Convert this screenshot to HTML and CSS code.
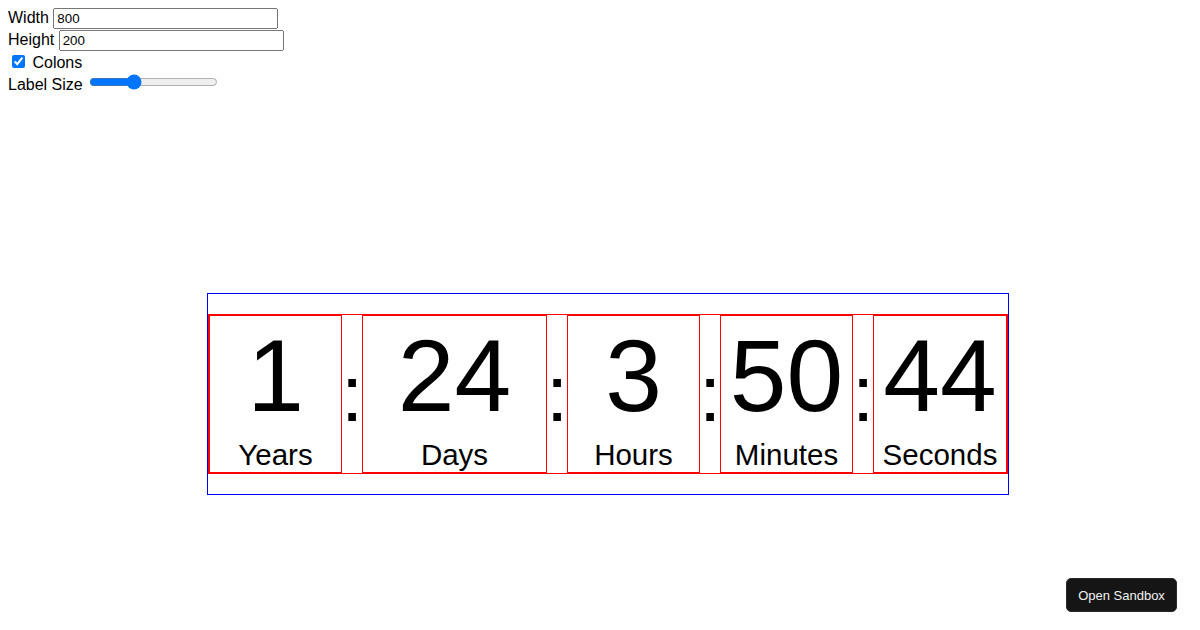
FILE: index.html
```html
<!DOCTYPE html>
<html>
<head>
<meta charset="utf-8">
<link rel="stylesheet" href="styles.css">
</head>
<body>
<div class="controls">
  <div class="row"><label>Width <input class="num" type="text" value="800"></label></div>
  <div class="row"><label>Height <input class="num" type="text" value="200"></label></div>
  <div class="row row-check"><label><input type="checkbox" checked> Colons</label></div>
  <div class="row row-range"><label>Label Size <input type="range" min="0" max="100" value="33"></label></div>
</div>
<div class="stage">
  <div class="frame">
    <div class="clock">
      <div class="unit u-years"><div class="value">1</div><div class="label">Years</div></div>
      <div class="colon">:</div>
      <div class="unit u-days"><div class="value">24</div><div class="label">Days</div></div>
      <div class="colon">:</div>
      <div class="unit u-hours"><div class="value">3</div><div class="label">Hours</div></div>
      <div class="colon">:</div>
      <div class="unit u-minutes"><div class="value">50</div><div class="label">Minutes</div></div>
      <div class="colon">:</div>
      <div class="unit u-seconds"><div class="value">44</div><div class="label">Seconds</div></div>
    </div>
  </div>
</div>
<button class="sandbox">Open Sandbox</button>
</body>
</html>
```
FILE: styles.css
```css
body {
  margin: 8px;
  font-family: "Liberation Sans", Arial, sans-serif;
  font-size: 16px;
  color: #000;
  background: #fff;
}
.controls .row {
  height: 22px;
  line-height: normal;
}
.controls .row-check {
  height: 20px;
}
.controls .row-range {
  height: 22px;
}
.num {
  box-sizing: border-box;
  width: 225px;
  font-family: "Liberation Sans", Arial, sans-serif;
  font-size: 13.33px;
  margin: 0;
}
.stage {
  width: 100vw;
  display: flex;
  justify-content: center;
  margin-top: 199px;
}
.frame {
  width: 800px;
  height: 200px;
  border: 1px solid blue;
  display: flex;
  align-items: center;
}
.clock {
  box-sizing: border-box;
  width: 800px;
  height: 160px;
  border: 1px solid red;
  display: grid;
  grid-template-columns: 133px 20px 185px 20px 133px 20px 133px 20px 1fr;
}
.unit {
  border: 1px solid red;
  display: flex;
  flex-direction: column;
  justify-content: flex-start;
  align-items: center;
  text-align: center;
  padding-top: 2px;
}
.value {
  font-size: 102px;
  line-height: normal;
}
.label {
  font-size: 29.5px;
  line-height: normal;
  margin-top: 3px;
}
.colon {
  font-size: 80px;
  line-height: normal;
  display: flex;
  align-items: center;
  justify-content: center;
  overflow: visible;
}
.sandbox {
  position: fixed;
  right: 23px;
  bottom: 18px;
  width: 111px;
  height: 34px;
  background: #151515;
  color: #f2f2f2;
  border: 1px solid #2a2a2a;
  border-radius: 5px;
  font-family: "Liberation Sans", Arial, sans-serif;
  font-size: 13px;
  padding: 0;
}
```
